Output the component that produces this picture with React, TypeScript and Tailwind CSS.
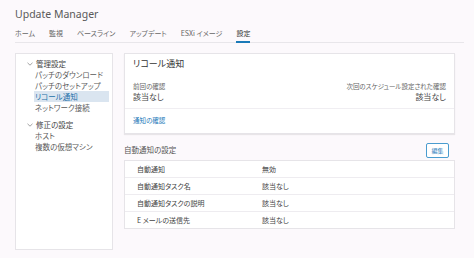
import React from "react";

const jp = "[font-family:'Noto_Sans_CJK_JP','Noto_Sans',sans-serif] [font-feature-settings:'palt']";

function Chevron() {
  return (
    <svg width="6" height="4" viewBox="0 0 6 4" className="mr-[3px]">
      <path d="M0.5 0.8 L3 3.2 L5.5 0.8" fill="none" stroke="#8a8a8a" strokeWidth="0.8" />
    </svg>
  );
}

export default function App() {
  const tabs = ["ホーム", "監視", "ベースライン", "アップデート", "ESXi イメージ", "設定"];
  const rows = [
    ["自動通知", "無効"],
    ["自動通知タスク名", "該当なし"],
    ["自動通知タスクの説明", "該当なし"],
    ["E メールの送信先", "該当なし"],
  ];
  return (
    <div className={`w-[474px] h-[258px] bg-[#fcf9fc] pl-[15px] pt-[6px] text-[#555] ${jp}`}>
      <div className="text-[10.5px] leading-[16px] text-[#5a5a5a] [font-family:'Noto_Sans',sans-serif]">Update Manager</div>
      <div className="mt-[5px] w-[449px] border-b border-[#e8e6ea] flex gap-[14px] text-[7px] leading-[12px] text-[#666]">
        {tabs.map((t, i) => (
          <div
            key={t}
            className={`pb-[2px] ${i === 5 ? "border-b-2 border-[#1a7ab8] text-[#333] -mb-px" : ""}`}
          >
            {t}
          </div>
        ))}
      </div>
      <div className="flex gap-[11px] mt-[10px]">
        <div className="w-[98px] h-[197px] bg-white border border-[#e6e4e8] pt-[4px] text-[7.5px] leading-[11px] text-[#5a5a5a]">
          <div className="flex items-center pl-[11px]">
            <Chevron />
            <span className="text-[#444]">管理設定</span>
          </div>
          <div className="pl-[19px] pr-[3px]">
            <div>パッチのダウンロード</div>
            <div>パッチのセットアップ</div>
            <div className="bg-[#dae5f0] text-[#1b6fa8] -ml-[1px] pl-[1px]">リコール通知</div>
            <div>ネットワーク接続</div>
          </div>
          <div className="flex items-center pl-[11px] mt-[6px]">
            <Chevron />
            <span className="text-[#444]">修正の設定</span>
          </div>
          <div className="pl-[19px]">
            <div>ホスト</div>
            <div>複数の仮想マシン</div>
          </div>
        </div>
        <div className="w-[331px]">
          <div className="bg-white border border-[#e6e4e8] shadow-[0_1px_1px_rgba(0,0,0,0.08)]">
            <div className="px-[8px] pt-[3px] pb-[6px]">
              <div className="text-[9px] leading-[14px] text-[#333]">リコール通知</div>
              <div className="flex justify-between mt-[10px] text-[6.5px] leading-[10px]">
                <div>
                  <div className="text-[#666]">前回の確認</div>
                  <div className="text-[8px] leading-[11px] text-[#444]">該当なし</div>
                </div>
                <div className="text-right">
                  <div className="text-[#666]">次回のスケジュール設定された確認</div>
                  <div className="text-[8px] leading-[11px] text-[#444]">該当なし</div>
                </div>
              </div>
            </div>
            <div className="border-t border-[#f0eef2] px-[8px] pt-[6px] pb-[8px] text-[6.5px] leading-[10px] text-[#1b78b8]">
              通知の確認
            </div>
          </div>
          <div className="flex justify-between items-end mt-[9px] pr-[6px]">
            <div className="text-[7.5px] leading-[12px] text-[#555] mb-[2px]">自動通知の設定</div>
            <div className="w-[23px] h-[15px] border border-[#4a9ccf] rounded-[2px] flex items-center justify-center text-[6px] text-[#1b78b8] bg-white">
              編集
            </div>
          </div>
          <div className="mt-[2px] bg-white border border-[#e6e4e8] text-[7px] leading-[16px] text-[#444]">
            {rows.map(([a, b], i) => (
              <div key={a} className={`flex ${i > 0 ? "border-t border-[#eeecf0]" : ""}`}>
                <div className="w-[137px] pl-[12px]">{a}</div>
                <div>{b}</div>
              </div>
            ))}
          </div>
        </div>
      </div>
    </div>
  );
}
